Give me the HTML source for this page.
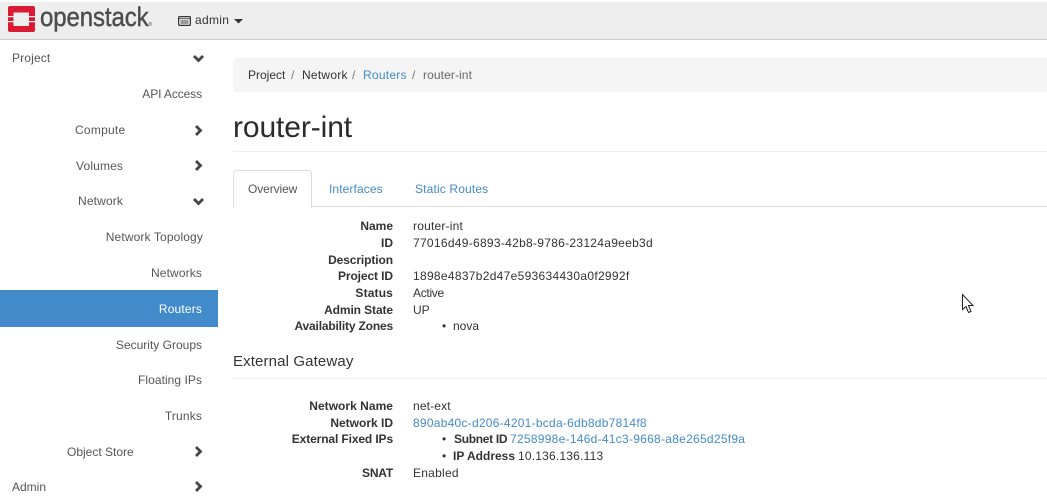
<!DOCTYPE html>
<html><head><meta charset="utf-8"><title>router-int</title>
<style>
html,body{margin:0;padding:0;background:#fff;width:1047px;height:503px;overflow:hidden}
body{position:relative;font:12px/16px "Liberation Sans",Arial,sans-serif;color:#333}
.t{position:absolute;white-space:nowrap;line-height:16px}
.r{text-align:right}
.s{color:#555}
.l{color:#428bca}
.h{letter-spacing:.27px}
b{font-weight:700}
.box{position:absolute}
svg{position:absolute;overflow:visible}
</style></head><body>
<div class="box" style="left:0;top:2px;width:1047px;height:37px;background:#eee"></div>
<div class="box" style="left:0;top:39px;width:1047px;height:1px;background:#ccc"></div>
<svg style="left:8px;top:6px" width="27" height="26" viewBox="0 0 27 26"><path fill="#da1a32" d="M2 0H25a2 2 0 0 1 2 2V10H21V6.500H5.500V10H0V2A2 2 0 0 1 2 0ZM0 11.200H5.500V15H0ZM21 11.200H27V15H21ZM0 16.200H5.500V20H21V16.200H27V24a2 2 0 0 1-2 2H2a2 2 0 0 1-2-2Z"/></svg>
<div class="t" style="left:40px;top:5px;font-size:24px;line-height:28px;color:#4d4d4d;-webkit-text-stroke:.4px #4d4d4d;transform:scaleY(1.1);transform-origin:0 21px;letter-spacing:-.1px">openstack<span style="font-size:5px;line-height:5px;-webkit-text-stroke:0">®</span></div>
<svg style="left:178px;top:16px" width="13" height="10" viewBox="0 0 13 10"><rect x=".6" y=".6" width="11.800" height="8.800" rx="1" fill="#eee" stroke="#333" stroke-width="1.200"/><path d="M1 2.700H12M2.500 5H10.500M2.500 7H10.500" stroke="#444" stroke-width=".9" fill="none"/></svg>
<div class="t" style="left:195px;top:12px;letter-spacing:.3px">admin</div>
<svg style="left:234px;top:19px" width="9" height="5"><path d="M0 0H9L4.500 4.500Z" fill="#333"/></svg>

<div class="t s" style="left:12px;top:50px;letter-spacing:.15px">Project</div>
<div class="t s r" style="right:845px;top:86px;letter-spacing:-.1px">API Access</div>
<div class="t s" style="left:75px;top:122px;letter-spacing:.25px">Compute</div>
<div class="t s" style="left:76px;top:158px;letter-spacing:.15px">Volumes</div>
<div class="t s" style="left:78px;top:193px;letter-spacing:.15px">Network</div>
<div class="t s r" style="right:844px;top:229px;letter-spacing:.13px">Network Topology</div>
<div class="t s r" style="right:845px;top:265px;letter-spacing:.12px">Networks</div>
<div class="box" style="left:0;top:290px;width:218px;height:37px;background:#428bca"></div>
<div class="t r" style="right:845px;top:301px;color:#fff;letter-spacing:.15px">Routers</div>
<div class="t s r" style="right:845px;top:337px">Security Groups</div>
<div class="t s r" style="right:845px;top:372px;letter-spacing:.05px">Floating IPs</div>
<div class="t s r" style="right:845px;top:408px;letter-spacing:.15px">Trunks</div>
<div class="t s" style="left:67px;top:444px">Object Store</div>
<div class="t s" style="left:12px;top:479px">Admin</div>

<svg style="left:192px;top:54px" width="13" height="9"><path d="M2 2L6.500 6.500L11 2" fill="none" stroke="#444" stroke-width="2.800"/></svg>
<svg style="left:192px;top:197px" width="13" height="9"><path d="M2 2L6.500 6.500L11 2" fill="none" stroke="#444" stroke-width="2.800"/></svg>
<svg style="left:194px;top:124px" width="9" height="13"><path d="M2 2L6.500 6.500L2 11" fill="none" stroke="#444" stroke-width="2.800"/></svg>
<svg style="left:194px;top:159px" width="9" height="13"><path d="M2 2L6.500 6.500L2 11" fill="none" stroke="#444" stroke-width="2.800"/></svg>
<svg style="left:194px;top:445px" width="9" height="13"><path d="M2 2L6.500 6.500L2 11" fill="none" stroke="#444" stroke-width="2.800"/></svg>
<svg style="left:194px;top:480px" width="9" height="13"><path d="M2 2L6.500 6.500L2 11" fill="none" stroke="#444" stroke-width="2.800"/></svg>

<div class="box" style="left:233px;top:58px;width:814px;height:34px;background:#f5f5f5;border-radius:4px 0 0 4px"></div>
<div class="t" style="left:248px;top:67px">Project</div>
<div class="t" style="left:291px;top:67px;color:#777">/</div>
<div class="t" style="left:302px;top:67px;letter-spacing:.25px">Network</div>
<div class="t" style="left:352px;top:67px;color:#777">/</div>
<div class="t l" style="left:363px;top:67px;letter-spacing:.25px">Routers</div>
<div class="t" style="left:412px;top:67px;color:#777">/</div>
<div class="t" style="left:423px;top:67px;color:#666;letter-spacing:.1px">router-int</div>

<div class="t" style="left:233px;top:111px;font-size:30px;line-height:34px;letter-spacing:-.1px;color:#2b2b2b">router-int</div>
<div class="box" style="left:233px;top:151px;width:814px;height:1px;background:#eee"></div>

<div class="box" style="left:233px;top:206px;width:814px;height:1px;background:#ddd"></div>
<div class="box" style="left:233px;top:170px;width:77px;border:1px solid #ddd;border-bottom:0;border-radius:4px 4px 0 0;background:#fff;height:37px"></div>
<div class="t" style="left:248px;top:181px;color:#555;letter-spacing:-.1px">Overview</div>
<div class="t l" style="left:329px;top:181px;letter-spacing:.1px">Interfaces</div>
<div class="t l" style="left:415px;top:181px;letter-spacing:.15px">Static Routes</div>

<div class="t r" style="right:654px;top:218px"><b>Name</b></div>
<div class="t r" style="right:654px;top:235px"><b>ID</b></div>
<div class="t r" style="right:654px;top:252px;letter-spacing:-.1px"><b>Description</b></div>
<div class="t r" style="right:654px;top:268px;letter-spacing:-.1px"><b>Project ID</b></div>
<div class="t r" style="right:654px;top:285px;letter-spacing:.15px"><b>Status</b></div>
<div class="t r" style="right:654px;top:302px;letter-spacing:-.1px"><b>Admin State</b></div>
<div class="t r" style="right:654px;top:318px;letter-spacing:-.17px"><b>Availability Zones</b></div>
<div class="t" style="left:413px;top:218px;letter-spacing:.2px">router-int</div>
<div class="t h" style="left:413px;top:235px;letter-spacing:.29px">77016d49-6893-42b8-9786-23124a9eeb3d</div>
<div class="t h" style="left:413px;top:268px;letter-spacing:.3px">1898e4837b2d47e593634430a0f2992f</div>
<div class="t" style="left:413px;top:285px;letter-spacing:-.3px">Active</div>
<div class="t" style="left:413px;top:302px">UP</div>
<div class="t" style="left:442px;top:318px">•</div>
<div class="t" style="left:453px;top:318px">nova</div>

<div class="t" style="left:233px;top:353px;font-size:15px;line-height:18px;letter-spacing:.13px">External Gateway</div>
<div class="box" style="left:233px;top:378px;width:814px;height:1px;background:#eee"></div>

<div class="t r" style="right:654px;top:398px;letter-spacing:.03px"><b>Network Name</b></div>
<div class="t r" style="right:654px;top:415px"><b>Network ID</b></div>
<div class="t r" style="right:654px;top:431px;letter-spacing:-.12px"><b>External Fixed IPs</b></div>
<div class="t r" style="right:654px;top:465px;letter-spacing:-.2px"><b>SNAT</b></div>
<div class="t" style="left:413px;top:398px;letter-spacing:.15px">net-ext</div>
<div class="t l h" style="left:413px;top:415px;letter-spacing:.25px">890ab40c-d206-4201-bcda-6db8db7814f8</div>
<div class="t" style="left:442px;top:431px">•</div>
<div class="t" style="left:454px;top:431px;letter-spacing:-.3px"><b>Subnet ID</b></div>
<div class="t l h" style="left:510px;top:431px;letter-spacing:.27px">7258998e-146d-41c3-9668-a8e265d25f9a</div>
<div class="t" style="left:442px;top:448px">•</div>
<div class="t" style="left:453px;top:448px"><b>IP Address</b></div>
<div class="t" style="left:518px;top:448px;letter-spacing:.2px">10.136.136.113</div>
<div class="t" style="left:413px;top:465px;letter-spacing:.25px">Enabled</div>

<svg style="left:962px;top:294px" width="13" height="20" viewBox="0 0 13 20"><path d="M.5.500V15.500L4 12.500L6.500 18.500L9 17.500L6.500 11.500H11Z" fill="#fff" stroke="#222" stroke-width="1"/></svg>
</body></html>
